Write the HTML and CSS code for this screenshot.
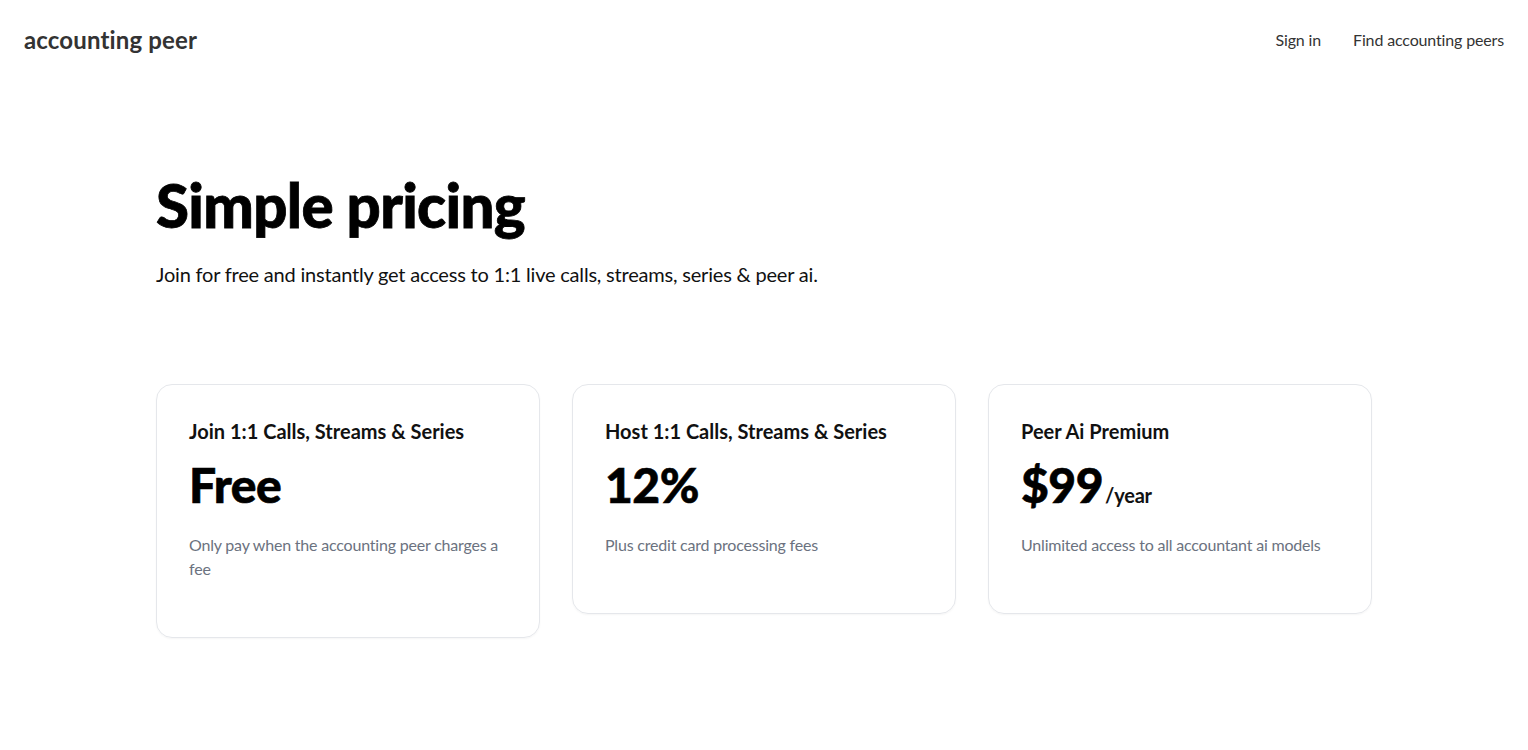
FILE: index.html
```html
<!DOCTYPE html>
<html lang="en">
<head>
<meta charset="utf-8">
<title>Simple pricing - accounting peer</title>
<link rel="stylesheet" href="styles.css">
</head>
<body>
<header class="site-header">
  <a class="logo" href="#">accounting peer</a>
  <nav class="nav">
    <a href="#">Sign in</a>
    <a href="#">Find accounting peers</a>
  </nav>
</header>
<main class="pricing">
  <h1 class="title">Simple pricing</h1>
  <p class="subtitle">Join for free and instantly get access to 1:1 live calls, streams, series &amp; peer ai.</p>
  <div class="cards">
    <div class="card">
      <h3 class="card-title">Join 1:1 Calls, Streams &amp; Series</h3>
      <p class="price">Free</p>
      <p class="desc">Only pay when the accounting peer charges a fee</p>
    </div>
    <div class="card">
      <h3 class="card-title">Host 1:1 Calls, Streams &amp; Series</h3>
      <p class="price">12%</p>
      <p class="desc">Plus credit card processing fees</p>
    </div>
    <div class="card">
      <h3 class="card-title">Peer Ai Premium</h3>
      <p class="price">$99<span class="period">/year</span></p>
      <p class="desc">Unlimited access to all accountant ai models</p>
    </div>
  </div>
</main>
</body>
</html>
```
FILE: styles.css
```css
* { box-sizing: border-box; }
html, body { margin: 0; padding: 0; }
body {
  font-family: Lato, "Open Sans", Arial, sans-serif;
  font-variant-ligatures: no-common-ligatures;
  background: #ffffff;
  color: #111111;
}
a { text-decoration: none; color: inherit; }

.site-header {
  height: 80px;
  padding: 0 24px;
  display: flex;
  align-items: center;
  justify-content: space-between;
}
.logo {
  font-size: 24px;
  font-weight: 700;
  color: #333333;
  line-height: 32px;
  letter-spacing: 0.15px;
}
.nav {
  display: flex;
  gap: 32px;
}
.nav a {
  font-size: 16px;
  line-height: 24px;
  color: #333333;
  letter-spacing: -0.15px;
}

.pricing {
  max-width: 1280px;
  margin: 0 auto;
  padding: 95px 32px 80px;
}
.title {
  margin: 0;
  font-size: 60px;
  line-height: 60px;
  font-weight: 900;
  color: #000000;
  letter-spacing: -0.65px;
  -webkit-text-stroke: 0.8px #000000;
}
.subtitle {
  margin: 25px 0 0;
  font-size: 20px;
  line-height: 28px;
  color: #111111;
  letter-spacing: -0.2px;
}
.cards {
  margin-top: 96px;
  display: grid;
  grid-template-columns: repeat(3, 1fr);
  gap: 32px;
  align-items: start;
}
.card {
  border: 1px solid #e5e7eb;
  border-radius: 16px;
  padding: 32px 32px 56px;
  box-shadow: 0 1px 2px rgba(0,0,0,0.04);
}
.card-title {
  margin: 0;
  font-size: 20px;
  line-height: 28px;
  font-weight: 700;
  color: #111111;
  letter-spacing: 0;
}
.price {
  margin: 16px 0 0;
  font-size: 48px;
  line-height: 48px;
  height: 48px;
  font-weight: 900;
  color: #000000;
  letter-spacing: -0.5px;
  -webkit-text-stroke: 0.6px #000000;
}
.period {
  margin-left: 2px;
  font-size: 20px;
  line-height: 1;
  font-weight: 700;
  color: #111111;
  letter-spacing: -0.2px;
  -webkit-text-stroke: 0;
}
.desc {
  margin: 24px 0 0;
  font-size: 16px;
  line-height: 24px;
  color: #6b7280;
  letter-spacing: -0.2px;
}
```
